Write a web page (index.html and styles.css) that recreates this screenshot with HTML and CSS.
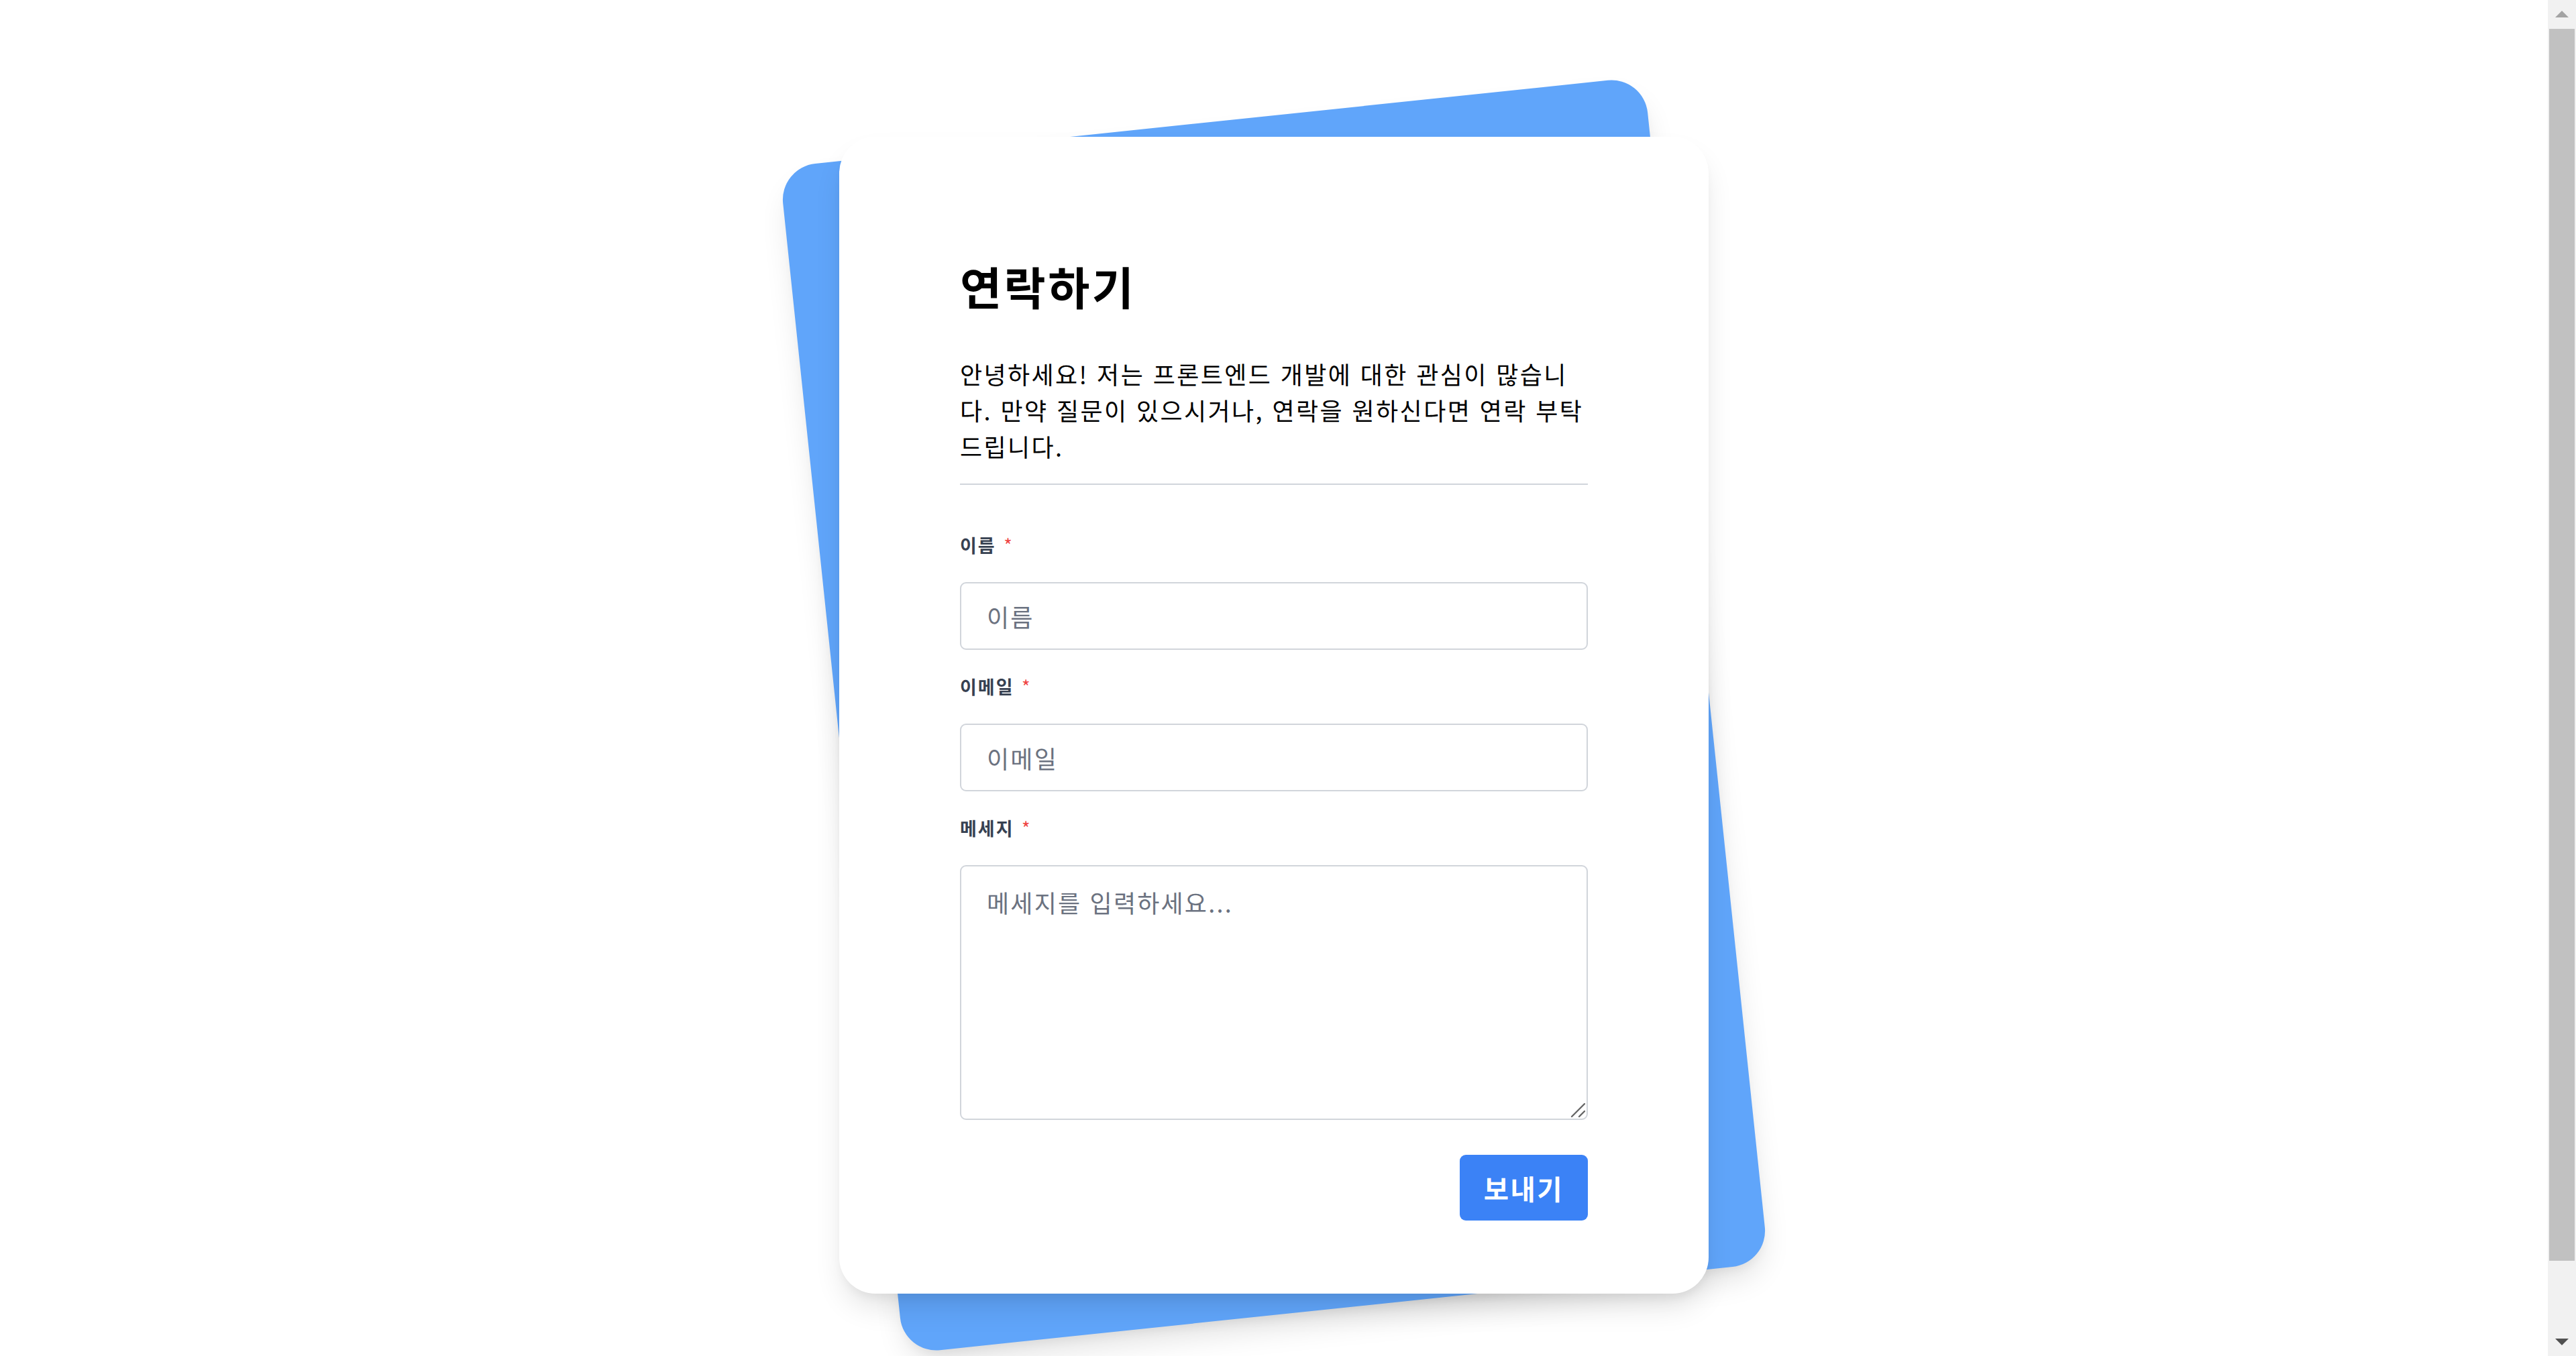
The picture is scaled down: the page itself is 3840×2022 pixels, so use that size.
FILE: index.html
```html
<!DOCTYPE html>
<html lang="ko">
<head>
<meta charset="utf-8">
<title>연락하기</title>
<link rel="stylesheet" href="styles.css">
</head>
<body>
<main class="page">
  <div class="stack">
    <div class="stack-bg"></div>
    <section class="card">
      <header class="intro">
        <h1 class="title">연락하기</h1>
        <p class="lead">안녕하세요! 저는 프론트엔드 개발에 대한 관심이 많습니다. 만약 질문이 있으시거나, 연락을 원하신다면 연락 부탁 드립니다.</p>
      </header>
      <form class="form">
        <div class="field">
          <label class="label" for="name">이름 <span class="req">*</span></label>
          <input class="input" id="name" type="text" placeholder="이름">
        </div>
        <div class="field">
          <label class="label" for="email">이메일 <span class="req">*</span></label>
          <input class="input" id="email" type="email" placeholder="이메일">
        </div>
        <div class="field field-last">
          <label class="label" for="message">메세지 <span class="req">*</span></label>
          <div class="textarea-wrap">
            <textarea class="input textarea" id="message" placeholder="메세지를 입력하세요..."></textarea>
            <svg class="grip" width="30" height="30" viewBox="0 0 30 30" aria-hidden="true">
              <path d="M6 25 L25 6 M17 25 L25 17" stroke="#666" stroke-width="2.4" stroke-linecap="round" fill="none"/>
            </svg>
          </div>
        </div>
        <div class="actions">
          <button class="btn" type="submit">보내기</button>
        </div>
      </form>
    </section>
  </div>
</main>
<div class="scrollbar" aria-hidden="true">
  <div class="sb-button"><span class="sb-arrow-up"></span></div>
  <div class="sb-track"><div class="sb-thumb"></div></div>
  <div class="sb-button"><span class="sb-arrow-down"></span></div>
</div>
</body>
</html>
```

FILE: styles.css
```css
body {
  margin: 0;
  background: #ffffff;
  color: #000000;
  font-family: "Noto Sans CJK KR", "Noto Sans", sans-serif;
}

.page {
  margin-right: 42px;
  padding: 177px 0 176px;
}

.stack {
  position: relative;
  width: 1296px;
  margin: 0 auto;
  padding: 27px 0;
}

.stack-bg {
  position: absolute;
  inset: 0;
  background: #60a5fa;
  border-radius: 54px;
  transform: rotate(-6deg);
  box-shadow: 0 25px 45px -8px rgba(0, 0, 0, 0.12), 0 10px 15px -5px rgba(0, 0, 0, 0.05);
}

.card {
  position: relative;
  background: #ffffff;
  border-radius: 54px;
  padding: 181px 180px 109px;
  box-shadow: 0 25px 45px -8px rgba(0, 0, 0, 0.12), 0 10px 15px -5px rgba(0, 0, 0, 0.05);
}

.intro {
  padding-bottom: 29px;
  border-bottom: 2px solid #d1d5db;
  margin-bottom: 72px;
}

.title {
  margin: 0;
  font-size: 67.5px;
  line-height: 81px;
  font-weight: 700;
  letter-spacing: 3.5px;
}

.lead {
  margin: 64px 0 0;
  font-size: 36px;
  line-height: 54px;
  letter-spacing: 2.4px;
}

.form {
  margin: 0;
}

.field {
  margin-bottom: 37px;
}

.field-last {
  margin-bottom: 52px;
}

.label {
  display: block;
  margin-bottom: 37px;
  font-size: 27px;
  line-height: 36px;
  font-weight: 700;
  letter-spacing: 2px;
  color: #374151;
}

.req {
  margin-left: 2px;
  color: #ef4444;
  font-weight: 400;
}

.input {
  display: block;
  box-sizing: border-box;
  width: 100%;
  height: 101px;
  margin: 0;
  padding: 0 38px;
  border: 2px solid #d1d5db;
  border-radius: 9px;
  background: #ffffff;
  color: #374151;
  font-family: inherit;
  font-size: 36px;
  letter-spacing: 2.2px;
  outline: none;
}

.input::placeholder {
  color: #6b7280;
  opacity: 1;
}

.textarea-wrap {
  position: relative;
}

.textarea {
  height: 380px;
  padding: 27px 38px;
  line-height: 52px;
  resize: none;
}

.grip {
  position: absolute;
  right: 0;
  bottom: 0;
  display: block;
  pointer-events: none;
}

.actions {
  display: flex;
  justify-content: flex-end;
}

.btn {
  height: 98px;
  padding: 0 36px;
  border: 0;
  border-radius: 9px;
  background: #3b82f6;
  color: #ffffff;
  font-family: inherit;
  font-size: 40.5px;
  line-height: 63px;
  font-weight: 700;
  letter-spacing: 2.5px;
  cursor: pointer;
}

/* window scrollbar as it appears in the capture */
.scrollbar {
  position: fixed;
  top: 0;
  right: 0;
  bottom: 0;
  width: 42px;
  display: flex;
  flex-direction: column;
  background: #f1f1f1;
}

.sb-button {
  height: 42px;
  flex: none;
  display: flex;
  align-items: center;
  justify-content: center;
}

.sb-arrow-up {
  width: 0;
  height: 0;
  border-left: 10px solid transparent;
  border-right: 10px solid transparent;
  border-bottom: 10px solid #a3a3a3;
}

.sb-arrow-down {
  width: 0;
  height: 0;
  border-left: 10px solid transparent;
  border-right: 10px solid transparent;
  border-top: 10px solid #505050;
}

.sb-track {
  flex: 1;
  padding: 1px 2px 0;
}

.sb-thumb {
  height: 1837px;
  background: #c1c1c1;
}
```
